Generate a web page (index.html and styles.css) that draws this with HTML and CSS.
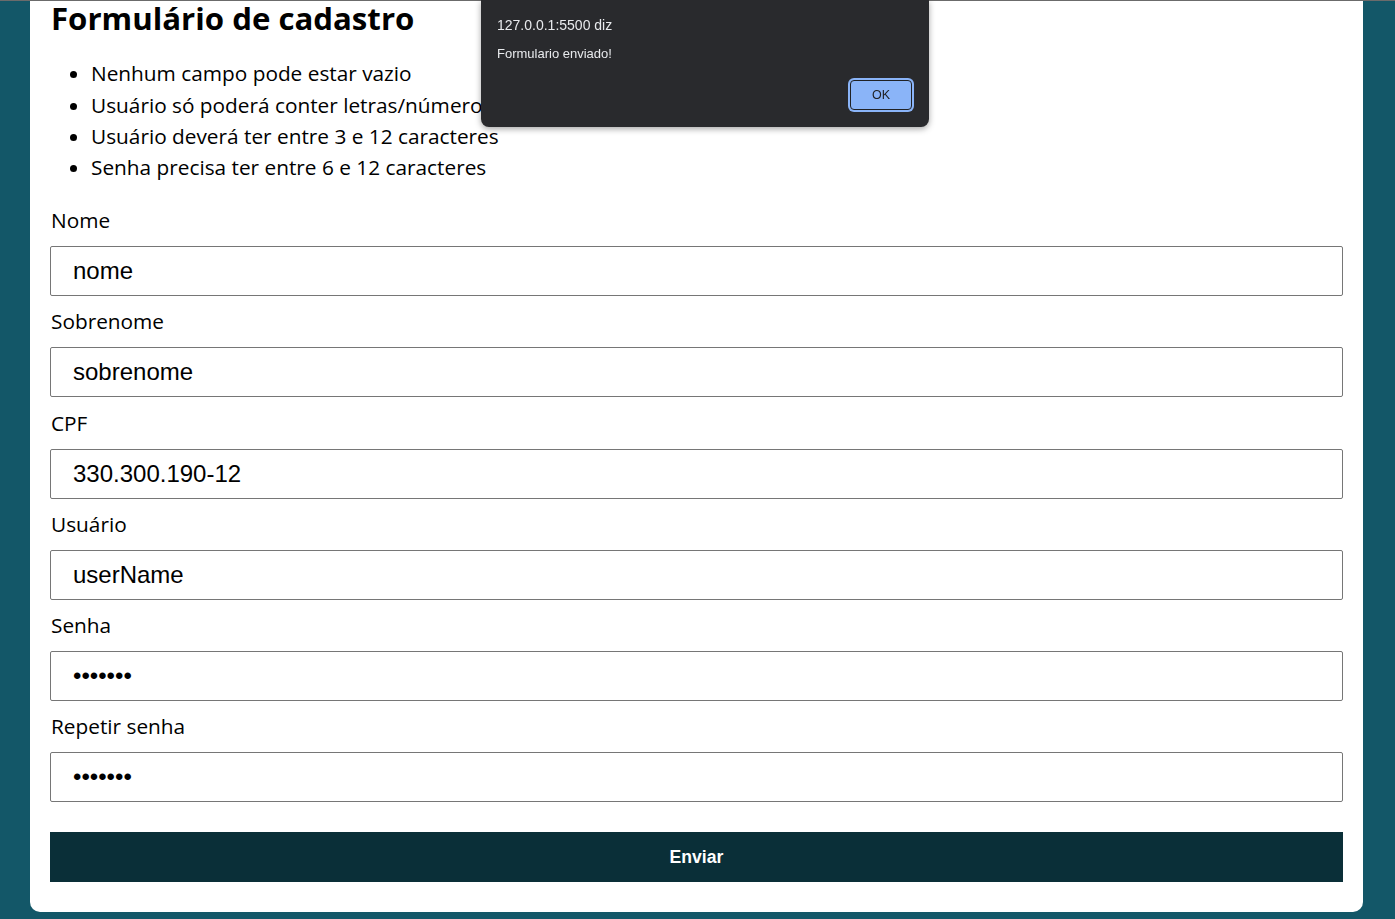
FILE: index.html
```html
<!DOCTYPE html>
<html lang="pt-BR">
<head>
<meta charset="utf-8">
<title>Formulário de cadastro</title>
<link rel="stylesheet" href="styles.css">
</head>
<body>
<div class="topline"></div>
<main class="page">
  <section class="card">
    <h1 class="title">Formulário de cadastro</h1>
    <ul class="rules">
      <li>Nenhum campo pode estar vazio</li>
      <li>Usuário só poderá conter letras/números</li>
      <li>Usuário deverá ter entre 3 e 12 caracteres</li>
      <li>Senha precisa ter entre 6 e 12 caracteres</li>
    </ul>
    <form class="form">
      <div class="field">
        <label class="label" for="nome">Nome</label>
        <input class="input" id="nome" type="text" value="nome">
      </div>
      <div class="field">
        <label class="label" for="sobrenome">Sobrenome</label>
        <input class="input" id="sobrenome" type="text" value="sobrenome">
      </div>
      <div class="field">
        <label class="label" for="cpf">CPF</label>
        <input class="input" id="cpf" type="text" value="330.300.190-12">
      </div>
      <div class="field">
        <label class="label" for="usuario">Usuário</label>
        <input class="input" id="usuario" type="text" value="userName">
      </div>
      <div class="field">
        <label class="label" for="senha">Senha</label>
        <input class="input" id="senha" type="password" value="1234567">
      </div>
      <div class="field">
        <label class="label" for="senha2">Repetir senha</label>
        <input class="input" id="senha2" type="password" value="1234567">
      </div>
      <button class="submit" type="button">Enviar</button>
    </form>
  </section>
</main>
<div class="dialog" role="alertdialog">
  <p class="dialog-origin">127.0.0.1:5500 diz</p>
  <p class="dialog-msg">Formulario enviado!</p>
  <div class="dialog-actions">
    <button class="dialog-ok" type="button">OK</button>
  </div>
</div>
</body>
</html>
```
FILE: styles.css
```css
* { box-sizing: border-box; }

html, body {
  margin: 0;
  padding: 0;
}

body {
  background: #135768;
  font-family: "Open Sans", "Noto Sans", sans-serif;
  color: #000;
  overflow: hidden;
}

.topline {
  position: fixed;
  top: 0;
  left: 0;
  right: 0;
  height: 1px;
  background: #6b6b6b;
  z-index: 5;
}

.page {
  padding: 0 32px 8px 30px;
}

.card {
  background: #fff;
  margin-top: -20px;
  padding: 20px 20px 30px;
  border-radius: 0 0 10px 10px;
}

.title {
  margin: 0;
  font-size: 31.2px;
  font-weight: 700;
  line-height: 36px;
  padding-left: 1px;
}

.rules {
  margin: 22.4px 0 23px;
  padding-left: 41px;
  font-size: 20.8px;
  line-height: 31.2px;
}

.form {
  margin: 0;
}

.field {
  margin-bottom: 11.2px;
}

.label {
  display: block;
  font-size: 20.8px;
  line-height: 28px;
  margin-bottom: 12px;
  padding-left: 1px;
}

.input {
  display: block;
  width: 100%;
  height: 50px;
  border: 1px solid #767676;
  border-radius: 2px;
  padding: 0 22px;
  font-family: "Liberation Sans", Arial, sans-serif;
  font-size: 24px;
  color: #000;
  background: #fff;
  outline: none;
}

.submit {
  display: block;
  width: 100%;
  height: 50px;
  margin-top: 30px;
  border: none;
  background: #0a2f38;
  color: #fff;
  font-family: "Liberation Sans", Arial, sans-serif;
  font-weight: 700;
  font-size: 17.6px;
  cursor: pointer;
}

.dialog {
  position: fixed;
  top: 0;
  left: 481px;
  width: 448px;
  height: 127px;
  background: #292a2d;
  border-radius: 0 0 8px 8px;
  box-shadow: 0 2px 6px rgba(0, 0, 0, 0.35);
  padding: 17px 16px 0 16px;
  font-family: "Liberation Sans", Arial, sans-serif;
  color: #e8eaed;
  z-index: 10;
}

.dialog-origin {
  margin: 0;
  font-size: 14px;
  line-height: 16px;
}

.dialog-msg {
  margin: 13px 0 0;
  font-size: 13px;
  line-height: 15px;
}

.dialog-actions {
  display: flex;
  justify-content: flex-end;
  margin-top: 19px;
}

.dialog-ok {
  width: 62px;
  height: 30px;
  margin-right: 1px;
  background: #8ab4f8;
  border: 1px solid #202124;
  border-radius: 4px;
  box-shadow: 0 0 0 2px #8ab4f8;
  color: #202124;
  font-family: "Liberation Sans", Arial, sans-serif;
  font-size: 12.5px;
  padding: 0;
}
```
